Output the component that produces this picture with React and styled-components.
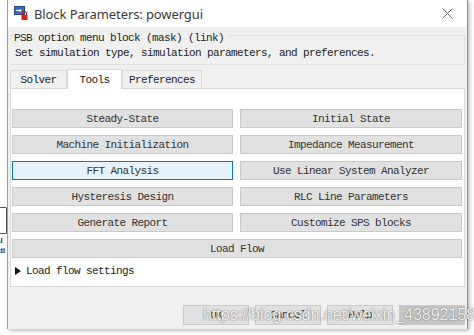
import React from "react";
import styled, { createGlobalStyle } from "styled-components";

const GlobalStyle = createGlobalStyle`
  html, body {
    margin: 0;
    padding: 0;
    background: #ffffff;
  }
`;

const mono = `"Liberation Mono", "DejaVu Sans Mono", monospace`;

const Page = styled.div`
  position: relative;
  width: 474px;
  height: 335px;
  overflow: hidden;
  background: #fff;
`;

const Backdrop = styled.div`
  position: absolute;
  left: -12px;
  top: 207px;
  width: 17px;
  height: 25px;
  border: 1px solid #555;
  border-radius: 1px;
`;

const BackdropText = styled.div`
  position: absolute;
  left: -4px;
  top: ${(p) => p.$top}px;
  font: bold 8px "Liberation Sans", sans-serif;
  color: #333;
`;

const Window = styled.div`
  position: relative;
  margin-left: 7px;
  width: 459px;
  height: 329px;
  display: flex;
  flex-direction: column;
  background: #f0f0f0;
  border-left: 1px solid #a0a0a0;
  border-right: 1px solid #8c8c8c;
  box-shadow: 2px 2px 4px rgba(0, 0, 0, 0.25);
`;

const TitleBar = styled.div`
  height: 27px;
  background: #fff;
  display: flex;
  align-items: center;
  padding-left: 6px;
  gap: 5px;
`;

const Title = styled.span`
  flex: 1;
  font: 13px "Noto Sans", "Open Sans", sans-serif;
  color: #3a3a3a;
  letter-spacing: -0.1px;
`;

const CloseBtn = styled.div`
  width: 30px;
  height: 27px;
  display: flex;
  align-items: center;
  justify-content: center;
  margin-right: 5px;
`;

const Body = styled.div`
  flex: 1;
  display: flex;
  flex-direction: column;
  padding: 0 2px;
`;

const Group = styled.div`
  margin-top: 8px;
  border: 1px solid #e0e0e0;
  border-left: none;
  height: 28px;
  position: relative;
`;

const Legend = styled.div`
  position: absolute;
  top: -4px;
  left: 4px;
  padding-right: 4px;
  background: #f0f0f0;
  font: 11px ${mono};
  letter-spacing: -0.6px;
  color: #222;
`;

const Desc = styled.div`
  padding: 11px 0 0 5px;
  font: 11px ${mono};
  letter-spacing: -0.6px;
  color: #222;
`;

const TabStrip = styled.div`
  height: 23px;
  display: flex;
  align-items: flex-end;
`;

const Tab = styled.div`
  height: ${(p) => (p.$active ? 19 : 17)}px;
  width: ${(p) => p.$w}px;
  display: flex;
  align-items: center;
  justify-content: center;
  font: 11px ${mono};
  letter-spacing: -0.6px;
  color: #222;
  background: ${(p) => (p.$active ? "#fff" : "#f0f0f0")};
  border: 1px solid #d9d9d9;
  border-bottom: none;
  margin-bottom: ${(p) => (p.$active ? "-1px" : "0")};
  position: relative;
  z-index: ${(p) => (p.$active ? 1 : 0)};
`;

const Panel = styled.div`
  width: 455px;
  height: 199px;
  box-sizing: border-box;
  background: #fff;
  border: 1px solid #d9d9d9;
  padding: 20px 2px 0 1px;
`;

const Grid = styled.div`
  display: grid;
  grid-template-columns: 221px 222px;
  column-gap: 7px;
  row-gap: 7px;
`;

const Button = styled.div`
  height: 19px;
  box-sizing: border-box;
  display: flex;
  align-items: center;
  justify-content: center;
  font: 11px ${mono};
  letter-spacing: -0.6px;
  color: #333;
  background: ${(p) => (p.$hover ? "#e5f1fb" : "#e1e1e1")};
  border: 1px solid ${(p) => (p.$hover ? "#0078d7" : "#c9c9c9")};
  grid-column: ${(p) => (p.$wide ? "1 / span 2" : "auto")};
`;

const Disclosure = styled.div`
  margin-top: 7px;
  margin-left: 3px;
  display: flex;
  align-items: center;
  gap: 5px;
  font: 11px ${mono};
  letter-spacing: -0.6px;
  color: #222;
`;

const Footer = styled.div`
  display: flex;
  justify-content: flex-end;
  gap: 6px;
  margin-top: 18px;
`;

const FootButton = styled.div`
  width: 66px;
  height: 20px;
  box-sizing: border-box;
  display: flex;
  align-items: center;
  justify-content: center;
  font: 11px ${mono};
  letter-spacing: -0.6px;
  color: ${(p) => (p.$disabled ? "#c4c4c4" : "#333")};
  background: ${(p) => (p.$disabled ? "#c6c6c6" : "#e1e1e1")};
  border: 1px solid ${(p) => (p.$disabled ? "#c6c6c6" : "#c9c9c9")};
`;

const Watermark = styled.div`
  position: absolute;
  left: 203px;
  top: 306px;
  font: 16px "Liberation Sans", Arial, sans-serif;
  color: rgba(255, 255, 255, 0.92);
  text-shadow: 0 0 1px rgba(70, 70, 70, 0.8), 0 0 2px rgba(120, 120, 120, 0.5);
  white-space: nowrap;
`;

const BlockIcon = () => (
  <svg width="15" height="15" viewBox="0 0 15 15">
    <rect x="0.5" y="0.5" width="10" height="8" fill="#3b6fb6" stroke="#24497e" />
    <path d="M2 4.5h5M5.5 3l1.5 1.5L5.5 6" stroke="#fff" strokeWidth="1" fill="none" />
    <path d="M8.5 9V7.5a2 2 0 0 1 4 0V9" stroke="#b01818" strokeWidth="1.2" fill="none" />
    <rect x="7.5" y="9" width="6" height="5" fill="#d42020" />
  </svg>
);

const CloseIcon = () => (
  <svg width="11" height="11" viewBox="0 0 11 11">
    <path d="M0.5 0.5l10 10M10.5 0.5l-10 10" stroke="#6a6a6a" strokeWidth="1" />
  </svg>
);

const Triangle = () => (
  <svg width="6" height="8" viewBox="0 0 6 8">
    <path d="M0 0L6 4L0 8Z" fill="#111" />
  </svg>
);

const tools = [
  ["Steady-State"],
  ["Initial State"],
  ["Machine Initialization"],
  ["Impedance Measurement"],
  ["FFT Analysis", true],
  ["Use Linear System Analyzer"],
  ["Hysteresis Design"],
  ["RLC Line Parameters"],
  ["Generate Report"],
  ["Customize SPS blocks"],
];

export default function App() {
  return (
    <Page>
      <GlobalStyle />
      <Backdrop />
      <BackdropText $top={236}>al</BackdropText>
      <BackdropText $top={246}>ati</BackdropText>
      <Window>
        <TitleBar>
          <BlockIcon />
          <Title>Block Parameters: powergui</Title>
          <CloseBtn>
            <CloseIcon />
          </CloseBtn>
        </TitleBar>
        <Body>
          <Group>
            <Legend>PSB option menu block (mask) (link)</Legend>
            <Desc>Set simulation type, simulation parameters, and preferences.</Desc>
          </Group>
          <TabStrip>
            <Tab $w={55}>Solver</Tab>
            <Tab $w={53} $active>
              Tools
            </Tab>
            <Tab $w={78}>Preferences</Tab>
          </TabStrip>
          <Panel>
            <Grid>
              {tools.map(([label, hover]) => (
                <Button key={label} $hover={hover}>
                  {label}
                </Button>
              ))}
              <Button $wide>Load Flow</Button>
            </Grid>
            <Disclosure>
              <Triangle />
              Load flow settings
            </Disclosure>
          </Panel>
          <Footer>
            <FootButton>OK</FootButton>
            <FootButton>Cancel</FootButton>
            <FootButton>Help</FootButton>
            <FootButton $disabled>Apply</FootButton>
          </Footer>
        </Body>
      </Window>
      <Watermark>https://blog.csdn.net/weixin_43892158</Watermark>
    </Page>
  );
}
